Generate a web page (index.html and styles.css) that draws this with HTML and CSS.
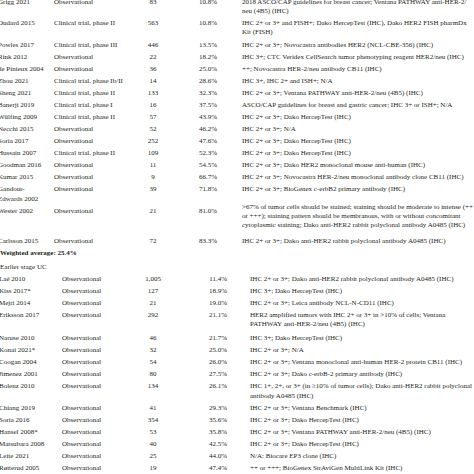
FILE: index.html
```html
<!DOCTYPE html>
<html lang="en">
<head>
<meta charset="utf-8">
<title>HER2 studies table</title>
<link rel="stylesheet" href="styles.css">
</head>
<body>
<div class="page">
  <table class="tbl tbl-advanced">
    <colgroup>
      <col class="c-name1"><col class="c-design1"><col class="c-n"><col class="c-pct1"><col class="c-method">
    </colgroup>
    <tbody>
      <tr><td>Grigg 2021</td><td>Observational</td><td class="n">83</td><td class="pct">10.8%</td><td>2018 ASCO/CAP guidelines for breast cancer; Ventana PATHWAY anti-HER-2/<br>neu (4B5) (IHC)</td></tr>
      <tr><td>Oudard 2015</td><td>Clinical trial, phase II</td><td class="n">563</td><td class="pct">10.8%</td><td>IHC 2+ or 3+ and FISH+; Dako HercepTest (IHC), Dako HER2 FISH pharmDx<br>Kit (FISH)</td></tr>
      <tr><td>Powles 2017</td><td>Clinical trial, phase III</td><td class="n">446</td><td class="pct">13.5%</td><td>IHC 2+ or 3+; Novocastra antibodies HER2 (NCL-CBE-356) (IHC)</td></tr>
      <tr><td>Rink 2012</td><td>Observational</td><td class="n">22</td><td class="pct">18.2%</td><td>IHC 3+; CTC Veridex CellSearch tumor phenotyping reagent HER2/neu (IHC)</td></tr>
      <tr><td>de Pinieux 2004</td><td>Observational</td><td class="n">36</td><td class="pct">25.0%</td><td>++; Novocastra HER-2/neu antibody CB11 (IHC)</td></tr>
      <tr><td>Zhou 2021</td><td>Clinical trial, phase Ib/II</td><td class="n">14</td><td class="pct">28.6%</td><td>IHC 3+, IHC 2+ and ISH+; N/A</td></tr>
      <tr><td>Sheng 2021</td><td>Clinical trial, phase II</td><td class="n">133</td><td class="pct">32.3%</td><td>IHC 2+ or 3+; Ventana PATHWAY anti-HER-2/neu (4B5) (IHC)</td></tr>
      <tr><td>Banerji 2019</td><td>Clinical trial, phase I</td><td class="n">16</td><td class="pct">37.5%</td><td>ASCO/CAP guidelines for breast and gastric cancer; IHC 3+ or ISH+; N/A</td></tr>
      <tr><td>Wülfing 2009</td><td>Clinical trial, phase II</td><td class="n">57</td><td class="pct">43.9%</td><td>IHC 2+ or 3+; Dako HercepTest (IHC)</td></tr>
      <tr><td>Necchi 2015</td><td>Observational</td><td class="n">52</td><td class="pct">46.2%</td><td>IHC 2+ or 3+; N/A</td></tr>
      <tr><td>Soria 2017</td><td>Observational</td><td class="n">252</td><td class="pct">47.6%</td><td>IHC 2+ or 3+; Dako HercepTest (IHC)</td></tr>
      <tr><td>Hussain 2007</td><td>Clinical trial, phase II</td><td class="n">109</td><td class="pct">52.3%</td><td>IHC 2+ or 3+; Dako HercepTest (IHC)</td></tr>
      <tr><td>Goodman 2016</td><td>Observational</td><td class="n">11</td><td class="pct">54.5%</td><td>IHC 2+ or 3+; Dako HER2 monoclonal mouse anti-human (IHC)</td></tr>
      <tr><td>Kumar 2015</td><td>Observational</td><td class="n">9</td><td class="pct">66.7%</td><td>IHC 2+ or 3+; Novocastra HER-2/neu monoclonal antibody clone CB11 (IHC)</td></tr>
      <tr><td>Gandour-<br>Edwards 2002</td><td>Observational</td><td class="n">39</td><td class="pct">71.8%</td><td>IHC 2+ or 3+; BioGenex c-erbB2 primary antibody (IHC)</td></tr>
      <tr><td>Wester 2002</td><td>Observational</td><td class="n">21</td><td class="pct">81.0%</td><td class="raised-cell"><span class="raised">&gt;67% of tumor cells should be stained; staining should be moderate to intense (++<br>or +++); staining pattern should be membranous, with or without concomitant<br>cytoplasmic staining; Dako anti-HER2 rabbit polyclonal antibody A0485 (IHC)</span></td></tr>
      <tr><td>Carlsson 2015</td><td>Observational</td><td class="n">72</td><td class="pct">83.3%</td><td>IHC 2+ or 3+; Dako anti-HER2 rabbit polyclonal antibody A0485 (IHC)</td></tr>
    </tbody>
  </table>

  <table class="tbl tbl-early">
    <colgroup>
      <col class="c-name2"><col class="c-design2"><col class="c-n"><col class="c-pct2"><col class="c-method">
    </colgroup>
    <tbody>
      <tr class="summary"><td colspan="5" class="span">Weighted average: 25.4%</td></tr>
      <tr><td colspan="5" class="span">Earlier stage UC</td></tr>
      <tr><td>Laé 2010</td><td>Observational</td><td class="n">1,005</td><td class="pct">11.4%</td><td>IHC 2+ or 3+; Dako anti-HER2 rabbit polyclonal antibody A0485 (IHC)</td></tr>
      <tr><td>Kiss 2017*</td><td>Observational</td><td class="n">127</td><td class="pct">18.9%</td><td>IHC 3+; Dako HercepTest (IHC)</td></tr>
      <tr><td>Mejri 2014</td><td>Observational</td><td class="n">21</td><td class="pct">19.0%</td><td>IHC 2+ or 3+; Leica antibody NCL-N-CD11 (IHC)</td></tr>
      <tr class="spaced"><td>Eriksson 2017</td><td>Observational</td><td class="n">292</td><td class="pct">21.1%</td><td>HER2 amplified tumors with IHC 2+ or 3+ in &gt;10% of cells; Ventana<br>PATHWAY anti-HER-2/neu (4B5) (IHC)</td></tr>
      <tr><td>Naruse 2010</td><td>Observational</td><td class="n">46</td><td class="pct">21.7%</td><td>IHC 3+; Dako HercepTest (IHC)</td></tr>
      <tr><td>Konai 2021*</td><td>Observational</td><td class="n">32</td><td class="pct">25.0%</td><td>IHC 2+ or 3+; N/A</td></tr>
      <tr><td>Coogan 2004</td><td>Observational</td><td class="n">54</td><td class="pct">26.0%</td><td>IHC 2+ or 3+; Ventana monoclonal anti-human HER-2 protein CB11 (IHC)</td></tr>
      <tr><td>Jimenez 2001</td><td>Observational</td><td class="n">80</td><td class="pct">27.5%</td><td>IHC 2+ or 3+; Dako c-erbB-2 primary antibody (IHC)</td></tr>
      <tr><td>Bolenz 2010</td><td>Observational</td><td class="n">134</td><td class="pct">26.1%</td><td>IHC 1+, 2+, or 3+ (in ≥10% of tumor cells); Dako anti-HER2 rabbit polyclonal<br>antibody A0485 (IHC)</td></tr>
      <tr><td>Chiang 2019</td><td>Observational</td><td class="n">41</td><td class="pct">29.3%</td><td>IHC 2+ or 3+; Ventana Benchmark (IHC)</td></tr>
      <tr><td>Soria 2016</td><td>Observational</td><td class="n">354</td><td class="pct">35.6%</td><td>IHC 2+ or 3+; Dako HercepTest (IHC)</td></tr>
      <tr><td>Hansel 2008*</td><td>Observational</td><td class="n">53</td><td class="pct">35.8%</td><td>IHC 2+ or 3+; Ventana PATHWAY anti-HER-2/neu (4B5) (IHC)</td></tr>
      <tr><td>Matsubara 2008</td><td>Observational</td><td class="n">40</td><td class="pct">42.5%</td><td>IHC 2+ or 3+; Dako HercepTest (IHC)</td></tr>
      <tr><td>Leite 2021</td><td>Observational</td><td class="n">25</td><td class="pct">44.0%</td><td>N/A: Biocare EP3 clone (IHC)</td></tr>
      <tr><td>Røtterud 2005</td><td>Observational</td><td class="n">19</td><td class="pct">47.4%</td><td>++ or +++; BioGenex StrAviGen MultiLink Kit (IHC)</td></tr>
    </tbody>
  </table>
</div>
</body>
</html>
```

FILE: styles.css
```css
html, body {
  margin: 0;
  padding: 0;
  background: #ffffff;
}

body {
  width: 474px;
  height: 474px;
  overflow: hidden;
  font-family: "Liberation Serif", "Times New Roman", serif;
  font-size: 7px;
  line-height: 9.2px;
  color: #231f20;
}

.page {
  margin-top: -3.5px;
}

.tbl {
  border-collapse: collapse;
  border-spacing: 0;
  table-layout: fixed;
}

.tbl td {
  padding: 1.45px 0;
  vertical-align: top;
  white-space: nowrap;
  text-align: left;
}

.tbl-advanced {
  margin-left: -2px;
  width: 484px;
}

.tbl-early {
  margin-left: -1px;
  width: 491px;
}

.c-name1 { width: 56px; }
.c-design1 { width: 76px; }
.c-n { width: 46px; }
.c-pct1 { width: 66px; }
.c-method { width: 240px; }

.c-name2 { width: 63px; }
.c-design2 { width: 68px; }
.c-pct2 { width: 74px; }

.tbl td.n {
  text-align: center;
}

.tbl td.pct {
  text-align: right;
}

.tbl-advanced td.pct {
  padding-right: 25px;
}

.tbl-early td.pct {
  padding-right: 23px;
}

.tbl td.raised-cell {
  padding-bottom: 5.3px;
}

.raised {
  display: block;
  margin-top: -4px;
}

.tbl td.span {
  padding-left: 1px;
}

.summary td {
  font-weight: bold;
  padding-bottom: 2.95px;
}

.spaced td {
  padding-bottom: 3.15px;
}
```
